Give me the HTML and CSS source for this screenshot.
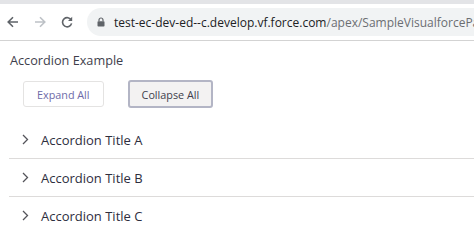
FILE: index.html
```html
<!DOCTYPE html>
<html lang="en">
<head>
    <meta charset="UTF-8">
    <meta name="viewport" content="width=device-width, initial-scale=1.0">
    <title>Accordion Example</title>
    <link rel="stylesheet" href="styles.css">
</head>
<body>
    <div class="toolbar">
        <div class="nav">
            <svg class="nav-icon" viewBox="0 0 12 12" width="12" height="12">
                <path d="M11 6H1.5M6 1.2L1.2 6 6 10.8" fill="none" stroke="#5f6368" stroke-width="1.6"/>
            </svg>
            <svg class="nav-icon" viewBox="0 0 12 12" width="12" height="12">
                <path d="M1 6h9.5M6 1.2L10.8 6 6 10.8" fill="none" stroke="#bdc1c6" stroke-width="1.6"/>
            </svg>
            <svg class="nav-icon" viewBox="0 0 12 12" width="12" height="12">
                <path d="M10.3 4.2A4.6 4.6 0 1 0 10.6 7.4" fill="none" stroke="#5f6368" stroke-width="1.6"/>
                <path d="M11.2 0.8V5H7z" fill="#5f6368"/>
            </svg>
        </div>
        <div class="omnibox">
            <svg class="lock" viewBox="0 0 8 10" width="8" height="10">
                <path d="M2 4.2V3a2 2 0 0 1 4 0v1.2" fill="none" stroke="#5f6368" stroke-width="1.2"/>
                <rect x="0.5" y="4.2" width="7" height="5.3" rx="0.8" fill="#5f6368"/>
            </svg>
            <span class="url"><span class="host">test-ec-dev-ed--c.develop.vf.force.com</span><span class="path">/apex/SampleVisualforcePage?</span></span>
        </div>
    </div>

    <div class="page">
        <h2 class="page-title">Accordion Example</h2>
        <div class="actions">
            <button class="btn">Expand All</button>
            <button class="btn btn-focus">Collapse All</button>
        </div>
        <ul class="accordion">
            <li class="section">
                <svg class="chevron" viewBox="0 0 7 11" width="7" height="11">
                    <path d="M1 1l4.5 4.5L1 10" fill="none" stroke="#54545a" stroke-width="1.3"/>
                </svg>
                <span>Accordion Title A</span>
            </li>
            <li class="section">
                <svg class="chevron" viewBox="0 0 7 11" width="7" height="11">
                    <path d="M1 1l4.5 4.5L1 10" fill="none" stroke="#54545a" stroke-width="1.3"/>
                </svg>
                <span>Accordion Title B</span>
            </li>
            <li class="section">
                <svg class="chevron" viewBox="0 0 7 11" width="7" height="11">
                    <path d="M1 1l4.5 4.5L1 10" fill="none" stroke="#54545a" stroke-width="1.3"/>
                </svg>
                <span>Accordion Title C</span>
            </li>
        </ul>
    </div>
</body>
</html>
```
FILE: styles.css
```css
body {
    font-family: "Open Sans", "Noto Sans", Arial, sans-serif;
    margin: 0;
    background-color: #fff;
    overflow: hidden;
}
.toolbar {
    display: flex;
    align-items: center;
    height: 36px;
    border-top: 4px solid #e3e4e7;
    border-bottom: 1px solid #d3d3d3;
    background: #fff;
    white-space: nowrap;
}
.nav {
    display: flex;
    gap: 15px;
    padding-left: 7px;
    width: 80px;
    flex-shrink: 0;
}
.omnibox {
    display: flex;
    align-items: center;
    height: 28px;
    padding-left: 10px;
    border-radius: 14px 0 0 14px;
    background: #f1f3f4;
    flex: 1;
    min-width: 0;
    font-size: 12px;
    overflow: hidden;
}
.lock {
    flex-shrink: 0;
    margin-right: 9px;
}
.url {
    flex-shrink: 0;
}
.host {
    color: #202124;
}
.path {
    color: #6b6e72;
}
.page {
    padding: 0 0 0 9px;
}
.page-title {
    margin: 10px 0 0 1px;
    font-size: 12.7px;
    font-weight: normal;
    color: #3e3e4c;
    line-height: 18px;
}
.actions {
    display: flex;
    gap: 24px;
    margin: 12px 0 0 14px;
}
.btn {
    font-family: inherit;
    font-size: 10.8px;
    height: 26px;
    padding: 0 13px;
    border: 1px solid #e4e3e2;
    border-radius: 3px;
    background: #fff;
    color: #6d6aa8;
}
.btn-focus {
    height: 28px;
    margin-top: -1px;
    padding: 0 12px;
    border: 2px solid #b3b5c5;
    background: #f3f2f2;
    color: #3e3e4c;
}
.accordion {
    list-style: none;
    margin: 13px 0 0;
    padding: 0;
}
.section {
    display: flex;
    align-items: center;
    height: 37px;
    padding-left: 13px;
    border-bottom: 1px solid #dddbda;
    font-size: 13px;
    color: #2e2e3e;
}
.section:last-child {
    border-bottom: none;
}
.chevron {
    margin-right: 12px;
}
```
